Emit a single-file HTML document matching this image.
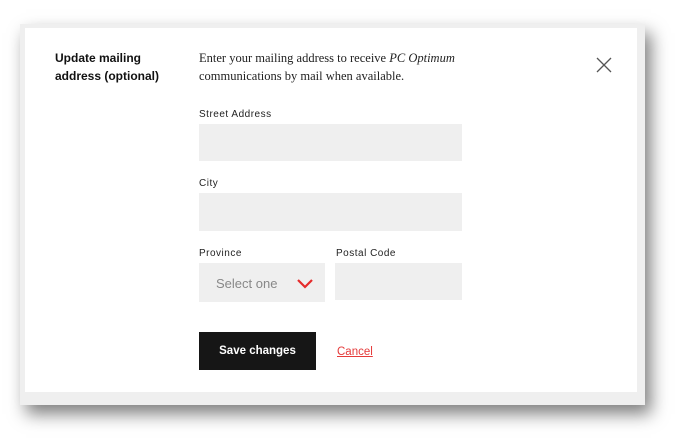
<!DOCTYPE html>
<html><head><meta charset="utf-8"><style>
body{margin:0;width:687px;height:447px;background:#fff;position:relative;overflow:hidden;font-family:"Liberation Sans",sans-serif;}
.frame{position:absolute;left:20px;top:24px;width:625px;height:381px;background:#efefef;box-shadow:6px 9px 16px rgba(0,0,0,0.5);}
.white{position:absolute;left:25px;top:28px;width:612px;height:364px;background:#fff;}
.abs{position:absolute;}
.title{left:55px;top:49px;font-weight:bold;font-size:12px;line-height:18px;color:#111;}
.desc{left:199px;top:49px;font-family:"Liberation Serif",serif;font-size:12.5px;line-height:18px;color:#222;}
.lbl{font-size:10px;color:#222;letter-spacing:0.5px;}
.inp{background:#efefef;}
</style></head><body>
<div class="frame"></div>
<div class="white"></div>
<div class="abs title">Update mailing<br>address (optional)</div>
<div class="abs desc">Enter your mailing address to receive <i>PC Optimum</i><br>communications by mail when available.</div>
<svg class="abs" style="left:596px;top:57px" width="16" height="16"><path d="M1 1L15 15M15 1L1 15" stroke="#555" stroke-width="1.3"/></svg>
<div class="abs lbl" style="left:199px;top:109px">Street Address</div>
<div class="abs inp" style="left:199px;top:124px;width:263px;height:37px"></div>
<div class="abs lbl" style="left:199px;top:178px">City</div>
<div class="abs inp" style="left:199px;top:193px;width:263px;height:38px"></div>
<div class="abs lbl" style="left:199px;top:248px">Province</div>
<div class="abs inp" style="left:199px;top:263px;width:126px;height:39px"></div>
<div class="abs" style="left:216px;top:276px;font-size:13px;color:#888">Select one</div>
<svg class="abs" style="left:296px;top:278px" width="18" height="11"><path d="M2 2L9 9L16 2" stroke="#e52b2b" stroke-width="2.2" fill="none"/></svg>
<div class="abs lbl" style="left:336px;top:248px">Postal Code</div>
<div class="abs inp" style="left:335px;top:263px;width:127px;height:37px"></div>
<div class="abs" style="left:199px;top:332px;width:117px;height:38px;background:#161616;color:#fff;font-weight:bold;font-size:11.5px;line-height:38px;text-align:center">Save changes</div>
<div class="abs" style="left:337px;top:346px;font-size:11.5px;color:#e53a3a;text-decoration:underline">Cancel</div>
</body></html>
